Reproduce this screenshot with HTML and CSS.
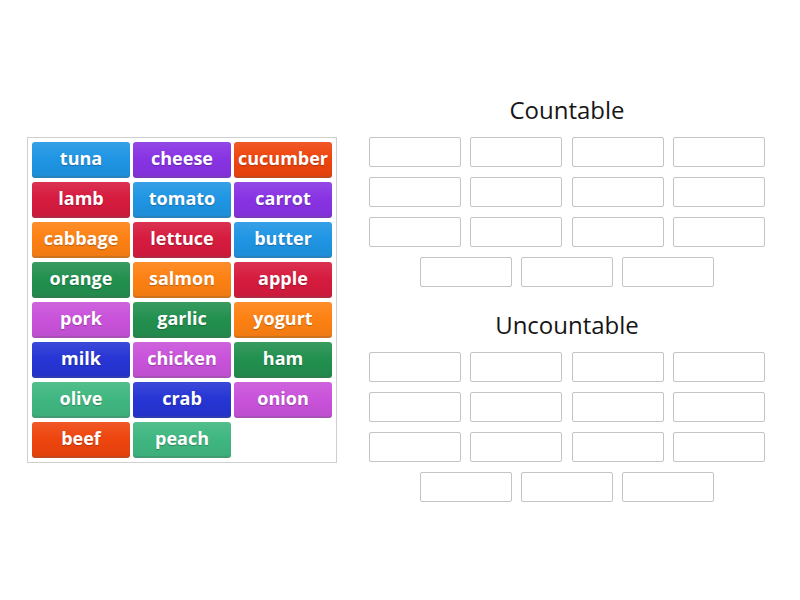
FILE: index.html
```html
<!DOCTYPE html>
<html>
<head>
<meta charset="utf-8">
<link rel="stylesheet" href="styles.css">
</head>
<body>
<div class="page">
  <div class="bank">
    <div class="tile blue">tuna</div>
    <div class="tile purple">cheese</div>
    <div class="tile vermilion">cucumber</div>
    <div class="tile red">lamb</div>
    <div class="tile blue">tomato</div>
    <div class="tile purple">carrot</div>
    <div class="tile orange">cabbage</div>
    <div class="tile red">lettuce</div>
    <div class="tile blue">butter</div>
    <div class="tile green">orange</div>
    <div class="tile orange">salmon</div>
    <div class="tile red">apple</div>
    <div class="tile pink">pork</div>
    <div class="tile green">garlic</div>
    <div class="tile orange">yogurt</div>
    <div class="tile navy">milk</div>
    <div class="tile pink">chicken</div>
    <div class="tile green">ham</div>
    <div class="tile teal">olive</div>
    <div class="tile navy">crab</div>
    <div class="tile pink">onion</div>
    <div class="tile vermilion">beef</div>
    <div class="tile teal">peach</div>
  </div>
  <div class="groups">
    <div class="group">
      <div class="title">Countable</div>
      <div class="slots">
        <div class="slot"></div><div class="slot"></div><div class="slot"></div><div class="slot"></div>
        <div class="slot"></div><div class="slot"></div><div class="slot"></div><div class="slot"></div>
        <div class="slot"></div><div class="slot"></div><div class="slot"></div><div class="slot"></div>
        <div class="slot"></div><div class="slot"></div><div class="slot"></div>
      </div>
    </div>
    <div class="group second">
      <div class="title">Uncountable</div>
      <div class="slots">
        <div class="slot"></div><div class="slot"></div><div class="slot"></div><div class="slot"></div>
        <div class="slot"></div><div class="slot"></div><div class="slot"></div><div class="slot"></div>
        <div class="slot"></div><div class="slot"></div><div class="slot"></div><div class="slot"></div>
        <div class="slot"></div><div class="slot"></div><div class="slot"></div>
      </div>
    </div>
  </div>
</div>
</body>
</html>
```

FILE: styles.css
```css
html, body {
  margin: 0;
  padding: 0;
  background: #ffffff;
  font-family: "Open Sans", "Noto Sans", sans-serif;
}

.page {
  display: flex;
  align-items: flex-start;
  padding: 95px 0 0 27px;
  gap: 32px;
}

.bank {
  margin-top: 42px;
  width: 300px;
  padding: 4px;
  border: 1px solid #cfcfcf;
  display: grid;
  grid-template-columns: repeat(3, 98px);
  grid-auto-rows: 36px;
  column-gap: 3px;
  row-gap: 4px;
}

.tile {
  box-sizing: border-box;
  border-radius: 3px;
  color: #ffffff;
  font-weight: 700;
  font-size: 18px;
  line-height: 33px;
  text-align: center;
  border-bottom: 2px solid rgba(0, 0, 0, 0.18);
  text-shadow: 0 1px 1px rgba(0, 0, 0, 0.25);
  background-image: linear-gradient(to bottom, rgba(255,255,255,0.10), rgba(255,255,255,0) 50%, rgba(0,0,0,0.05));
}

.blue { background-color: #1f95e3; }
.purple { background-color: #8833e3; }
.vermilion { background-color: #ee450e; }
.red { background-color: #d61b3e; }
.orange { background-color: #fd8113; }
.green { background-color: #22904f; }
.pink { background-color: #c952da; }
.navy { background-color: #2635d4; }
.teal { background-color: #3fb780; }

.groups {
  width: 396px;
  display: flex;
  flex-direction: column;
}

.group.second {
  margin-top: 23px;
}

.title {
  font-size: 24px;
  line-height: 30px;
  text-align: center;
  color: #161616;
  margin-bottom: 12px;
}

.slots {
  display: flex;
  flex-wrap: wrap;
  justify-content: center;
  column-gap: 9.33px;
  row-gap: 10px;
}

.slot {
  box-sizing: border-box;
  width: 92px;
  height: 30px;
  border: 1px solid #c4c4c4;
  border-radius: 2px;
  background: #ffffff;
}
```
